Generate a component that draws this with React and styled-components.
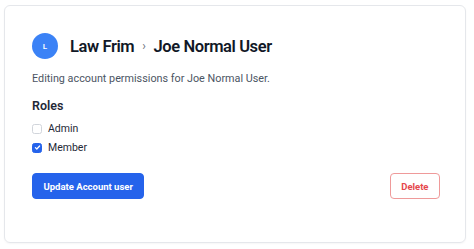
import styled, { createGlobalStyle } from 'styled-components';

const GlobalStyle = createGlobalStyle`
	body {
		margin: 0;
		background: #fff;
		font-family: Roboto, "Liberation Sans", sans-serif;
		color: #111827;
	}
`;

const Page = styled.div`
	padding: 5px 8px 6px 4px;
`;

const Card = styled.div`
	border: 1px solid #e5e7eb;
	border-radius: 6px;
	padding: 27px 25px 43px 27px;
	box-shadow: 0 1px 2px rgba(0, 0, 0, 0.04);
`;

const Header = styled.div`
	display: flex;
	align-items: center;
	gap: 12px;
`;

const Avatar = styled.div`
	width: 26px;
	height: 26px;
	border-radius: 50%;
	background: #3b82f6;
	color: #fff;
	font-size: 8px;
	font-weight: 600;
	display: flex;
	align-items: center;
	justify-content: center;
`;

const Crumbs = styled.div`
	display: flex;
	align-items: center;
	gap: 8px;
	font-size: 16.5px;
	font-weight: 600;
	letter-spacing: -0.4px;
	color: #111827;
`;

const Sep = styled.span`
	font-size: 12px;
	font-weight: 400;
	color: #6b7280;
`;

const Description = styled.p`
	margin: 13px 0 0;
	font-size: 10.8px;
	line-height: 14px;
	color: #4b5563;
`;

const SectionTitle = styled.h3`
	margin: 12px 0 6px;
	font-size: 12.5px;
	line-height: 15px;
	font-weight: 600;
	color: #1f2937;
`;

const CheckRow = styled.label`
	display: flex;
	align-items: center;
	gap: 6px;
	height: 19px;
	font-size: 10.5px;
	color: #1f2937;
`;

const Box = styled.span`
	box-sizing: border-box;
	width: 10px;
	height: 10px;
	border-radius: 2.5px;
	border: 1px solid ${(p) => (p.$checked ? '#2563eb' : '#d1d5db')};
	background: ${(p) => (p.$checked ? '#2563eb' : '#fff')};
	display: flex;
	align-items: center;
	justify-content: center;
`;

const Actions = styled.div`
	display: flex;
	justify-content: space-between;
	align-items: center;
	margin-top: 16px;
`;

const Button = styled.button`
	height: 26px;
	padding: 0 10.5px;
	border-radius: 4px;
	font-family: Roboto, "Liberation Sans", sans-serif;
	font-size: 9.5px;
	font-weight: 700;
	cursor: pointer;
	border: 1px solid ${(p) => (p.$danger ? '#ef9a9a' : '#2563eb')};
	background: ${(p) => (p.$danger ? '#fff' : '#2563eb')};
	color: ${(p) => (p.$danger ? '#e5484d' : '#fff')};
`;

const Check = () => (
	<svg width="7" height="7" viewBox="0 0 10 10">
		<path d="M2 5.2l2 2 4-4.4" fill="none" stroke="#fff" strokeWidth="1.8" strokeLinecap="round" strokeLinejoin="round" />
	</svg>
);

const roles = [
	{ name: 'Admin', checked: false },
	{ name: 'Member', checked: true },
];

export default function App() {
	return (
		<>
			<GlobalStyle />
			<Page>
				<Card>
					<Header>
						<Avatar>L</Avatar>
						<Crumbs>
							<span>Law Frim</span>
							<Sep>›</Sep>
							<span>Joe Normal User</span>
						</Crumbs>
					</Header>
					<Description>Editing account permissions for Joe Normal User.</Description>
					<SectionTitle>Roles</SectionTitle>
					{roles.map((r) => (
						<CheckRow key={r.name}>
							<Box $checked={r.checked}>{r.checked && <Check />}</Box>
							{r.name}
						</CheckRow>
					))}
					<Actions>
						<Button>Update Account user</Button>
						<Button $danger>Delete</Button>
					</Actions>
				</Card>
			</Page>
		</>
	);
}
